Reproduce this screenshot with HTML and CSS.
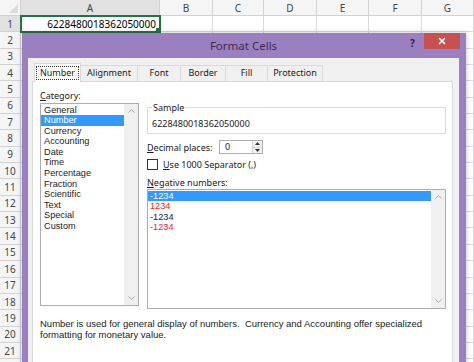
FILE: index.html
```html
<!DOCTYPE html>
<html lang="en">
<head>
    <meta charset="UTF-8">
    <title>Format Cells</title>
    <link rel="stylesheet" href="styles.css">
</head>
<body>
    <table class="sheet">
        <colgroup>
            <col style="width:21px"><col style="width:139px"><col style="width:53px"><col style="width:51px">
            <col style="width:53px"><col style="width:52px"><col style="width:53px"><col style="width:52px">
        </colgroup>
        <tr class="head">
            <th class="corner"></th><th class="cur">A</th><th>B</th><th>C</th><th>D</th><th>E</th><th>F</th><th>G</th>
        </tr>
        <tr><th class="cur">1</th><td class="active">6228480018362050000</td><td></td><td></td><td></td><td></td><td></td><td></td></tr>
        <tr><th>2</th><td></td><td></td><td></td><td></td><td></td><td></td><td></td></tr>
        <tr><th>3</th><td></td><td></td><td></td><td></td><td></td><td></td><td></td></tr>
        <tr><th>4</th><td></td><td></td><td></td><td></td><td></td><td></td><td></td></tr>
        <tr><th>5</th><td></td><td></td><td></td><td></td><td></td><td></td><td></td></tr>
        <tr><th>6</th><td></td><td></td><td></td><td></td><td></td><td></td><td></td></tr>
        <tr><th>7</th><td></td><td></td><td></td><td></td><td></td><td></td><td></td></tr>
        <tr><th>8</th><td></td><td></td><td></td><td></td><td></td><td></td><td></td></tr>
        <tr><th>9</th><td></td><td></td><td></td><td></td><td></td><td></td><td></td></tr>
        <tr><th>10</th><td></td><td></td><td></td><td></td><td></td><td></td><td></td></tr>
        <tr><th>11</th><td></td><td></td><td></td><td></td><td></td><td></td><td></td></tr>
        <tr><th>12</th><td></td><td></td><td></td><td></td><td></td><td></td><td></td></tr>
        <tr><th>13</th><td></td><td></td><td></td><td></td><td></td><td></td><td></td></tr>
        <tr><th>14</th><td></td><td></td><td></td><td></td><td></td><td></td><td></td></tr>
        <tr><th>15</th><td></td><td></td><td></td><td></td><td></td><td></td><td></td></tr>
        <tr><th>16</th><td></td><td></td><td></td><td></td><td></td><td></td><td></td></tr>
        <tr><th>17</th><td></td><td></td><td></td><td></td><td></td><td></td><td></td></tr>
        <tr><th>18</th><td></td><td></td><td></td><td></td><td></td><td></td><td></td></tr>
        <tr><th>19</th><td></td><td></td><td></td><td></td><td></td><td></td><td></td></tr>
        <tr><th>20</th><td></td><td></td><td></td><td></td><td></td><td></td><td></td></tr>
        <tr><th>21</th><td></td><td></td><td></td><td></td><td></td><td></td><td></td></tr>
        <tr><th></th><td></td><td></td><td></td><td></td><td></td><td></td><td></td></tr>
    </table>

    <div class="dialog">
        <div class="titlebar">
            Format Cells
            <span class="help">?</span>
            <span class="close">
                <svg width="10" height="10" viewBox="0 0 10 10"><path d="M2 2L8 8M8 2L2 8" stroke="#fff" stroke-width="1.6"/></svg>
            </span>
        </div>
        <div class="content">
            <div class="tabs">
                <div class="tab on" style="width:47px"><span class="focus">Number</span></div>
                <div class="tab" style="width:58px">Alignment</div>
                <div class="tab" style="width:44px">Font</div>
                <div class="tab" style="width:46px">Border</div>
                <div class="tab" style="width:43px">Fill</div>
                <div class="tab" style="width:56px">Protection</div>
            </div>
            <div class="panel">
                <div class="cols">
                    <div class="left">
                        <div class="lbl"><u>C</u>ategory:</div>
                        <div class="listbox cat">
                            <div class="items">
                                <div class="item">General</div>
                                <div class="item sel">Number</div>
                                <div class="item">Currency</div>
                                <div class="item">Accounting</div>
                                <div class="item">Date</div>
                                <div class="item">Time</div>
                                <div class="item">Percentage</div>
                                <div class="item">Fraction</div>
                                <div class="item">Scientific</div>
                                <div class="item">Text</div>
                                <div class="item">Special</div>
                                <div class="item">Custom</div>
                            </div>
                            <div class="scroll">
                                <svg width="7" height="4" viewBox="0 0 7 4"><path d="M0.5 3.5L3.5 0.7L6.5 3.5" fill="none" stroke="#a6a6a6"/></svg>
                                <svg width="7" height="4" viewBox="0 0 7 4"><path d="M0.5 0.5L3.5 3.3L6.5 0.5" fill="none" stroke="#a6a6a6"/></svg>
                            </div>
                        </div>
                    </div>
                    <div class="right">
                        <fieldset class="sample">
                            <legend>Sample</legend>
                            <div class="lbl">6228480018362050000</div>
                        </fieldset>
                        <div class="dec">
                            <span class="dec-lbl"><u>D</u>ecimal places:</span>
                            <div class="spin">
                                <span class="val">0</span>
                                <span class="btns">
                                    <span><svg width="5" height="3" viewBox="0 0 5 3"><path d="M0 3L2.5 0L5 3Z" fill="#333"/></svg></span>
                                    <span><svg width="5" height="3" viewBox="0 0 5 3"><path d="M0 0L2.5 3L5 0Z" fill="#333"/></svg></span>
                                </span>
                            </div>
                        </div>
                        <div class="check">
                            <span class="box"></span>
                            <span><u>U</u>se 1000 Separator (,)</span>
                        </div>
                        <div class="lbl neg-lbl"><u>N</u>egative numbers:</div>
                        <div class="listbox neg">
                            <div class="items">
                                <div class="item sel">-1234</div>
                                <div class="item red">1234</div>
                                <div class="item">-1234</div>
                                <div class="item red">-1234</div>
                            </div>
                            <div class="scroll">
                                <svg width="7" height="4" viewBox="0 0 7 4"><path d="M0.5 3.5L3.5 0.7L6.5 3.5" fill="none" stroke="#a6a6a6"/></svg>
                                <svg width="7" height="4" viewBox="0 0 7 4"><path d="M0.5 0.5L3.5 3.3L6.5 0.5" fill="none" stroke="#a6a6a6"/></svg>
                            </div>
                        </div>
                    </div>
                </div>
                <p class="desc">Number is used for general display of numbers.&nbsp; Currency and Accounting offer specialized<br>formatting for monetary value.</p>
            </div>
        </div>
    </div>
</body>
</html>
```

FILE: styles.css
```css
* {
    box-sizing: border-box;
}
body {
    margin: 0;
    width: 474px;
    height: 362px;
    overflow: hidden;
    position: relative;
    background: #fff;
    font-family: "Noto Sans", "DejaVu Sans", sans-serif;
    color: #1a1a1a;
}

/* spreadsheet behind the dialog */
.sheet {
    border-collapse: separate;
    border-spacing: 0;
    table-layout: fixed;
    width: 474px;
}
.sheet tr {
    height: 16.35px;
}
.sheet tr.head {
    height: 16px;
}
.sheet th,
.sheet td {
    padding: 0;
    border-right: 1px solid #dadada;
    border-bottom: 1px solid #dadada;
    font-size: 10px;
    line-height: 14px;
    overflow: hidden;
}
.sheet th {
    background: #f5f5f5;
    color: #444;
    font-weight: normal;
    text-align: center;
    border-color: #d2d2d2;
}
.sheet th.cur {
    background: #e1e1e1;
}
.sheet .corner {
    position: relative;
}
.sheet .corner::after {
    content: "";
    position: absolute;
    right: 2px;
    bottom: 2px;
    border-left: 9px solid transparent;
    border-bottom: 9px solid #dcdcdc;
}
.sheet td.active {
    position: relative;
    text-align: right;
    padding-right: 3px;
    color: #000;
    outline: 2px solid #217346;
    outline-offset: -1px;
}
.sheet td.active::after {
    content: "";
    position: absolute;
    right: -2px;
    bottom: -2px;
    width: 4px;
    height: 4px;
    background: #217346;
    border: 1px solid #fff;
}

/* dialog */
.dialog {
    position: absolute;
    left: 22px;
    top: 33px;
    width: 444px;
    height: 340px;
    background: #9b80bf;
    padding: 0 7px 0 6px;
    display: flex;
    flex-direction: column;
    box-shadow: 0 0 5px rgba(0, 0, 0, 0.25);
}
.titlebar {
    height: 25px;
    position: relative;
    display: flex;
    align-items: center;
    justify-content: center;
    color: #3b2b56;
    font-size: 11.5px;
}
.help {
    position: absolute;
    left: 382px;
    top: 4px;
    font-size: 10px;
    line-height: 12px;
    font-weight: bold;
    color: #2e2345;
}
.close {
    position: absolute;
    top: 0;
    right: -1px;
    width: 36px;
    height: 16px;
    background: #c75050;
    display: flex;
    align-items: center;
    justify-content: center;
}
.content {
    flex: 1;
    background: #f0f0f0;
    padding: 5px 6px 0 4px;
    display: flex;
    flex-direction: column;
}
.tabs {
    display: flex;
    align-items: flex-start;
    height: 19px;
    padding-left: 2px;
    margin-bottom: -1px;
    position: relative;
    z-index: 1;
}
.tab {
    height: 16px;
    margin-top: 2px;
    margin-right: -1px;
    border: 1px solid #d9d9d9;
    border-bottom: none;
    background: #f0f0f0;
    font-size: 9px;
    line-height: 14px;
    text-align: center;
    color: #1a1a1a;
}
.tab.on {
    height: 19px;
    margin-top: 0;
    background: #fff;
    padding-top: 2px;
}
.focus {
    display: inline-block;
    border: 1px dotted #333;
    padding: 0 3px;
    line-height: 12px;
}
.panel {
    flex: 1;
    background: #fff;
    border: 1px solid #d9d9d9;
    padding: 7.5px 6px 0 7px;
}
.cols {
    display: flex;
    gap: 8px;
}
.left {
    width: 99px;
}
.right {
    flex: 1;
    padding-top: 12px;
}
.lbl {
    font-size: 9px;
    line-height: 11px;
    height: 11px;
    white-space: nowrap;
}
.left .lbl {
    margin-bottom: 2.5px;
}
.listbox {
    display: flex;
    border: 1px solid #abadb3;
    background: #fff;
}
.cat {
    height: 203px;
}
.items {
    flex: 1;
    padding-top: 0.5px;
}
.item {
    height: 10.6px;
    line-height: 10.6px;
    font-family: "Liberation Sans", Arial, sans-serif;
    font-size: 9.2px;
    padding-left: 3px;
    white-space: nowrap;
}
.item.sel {
    background: #3399ff;
    color: #fff;
}
.item.red {
    color: #f01c24;
}
.scroll {
    width: 14px;
    background: #f0f0f0;
    display: flex;
    flex-direction: column;
    justify-content: space-between;
    align-items: center;
    padding: 5px 0;
}
.sample {
    margin: 0;
    min-width: 0;
    padding: 5px 4px 4px;
    border: 1px solid #dcdcdc;
}
.sample legend {
    padding: 0 1px;
    font-size: 9px;
    line-height: 11px;
}
.dec {
    display: flex;
    align-items: center;
    margin-top: 6.5px;
    height: 14px;
    font-size: 9px;
}
.dec-lbl {
    width: 72px;
}
.spin {
    width: 44px;
    height: 14px;
    border: 1px solid #abadb3;
    display: flex;
}
.spin .val {
    flex: 1;
    padding-left: 5px;
    line-height: 12px;
}
.btns {
    width: 10px;
    display: flex;
    flex-direction: column;
    border-left: 1px solid #d4d4d4;
    background: #f0f0f0;
}
.btns span {
    flex: 1;
    display: flex;
    align-items: center;
    justify-content: center;
}
.btns span + span {
    border-top: 1px solid #d4d4d4;
}
.check {
    display: flex;
    align-items: center;
    gap: 5px;
    margin-top: 4.5px;
    height: 11px;
    font-size: 9px;
}
.box {
    width: 11px;
    height: 11px;
    border: 1px solid #333;
    background: #fff;
}
.neg-lbl {
    margin-top: 7px;
}
.neg {
    margin-top: 1.5px;
    height: 120px;
}
.neg .item {
    padding-left: 2px;
}
.desc {
    margin: 8.5px 0 0;
    font-family: "Liberation Sans", Arial, sans-serif;
    font-size: 9.5px;
    line-height: 11px;
    white-space: nowrap;
}
```
